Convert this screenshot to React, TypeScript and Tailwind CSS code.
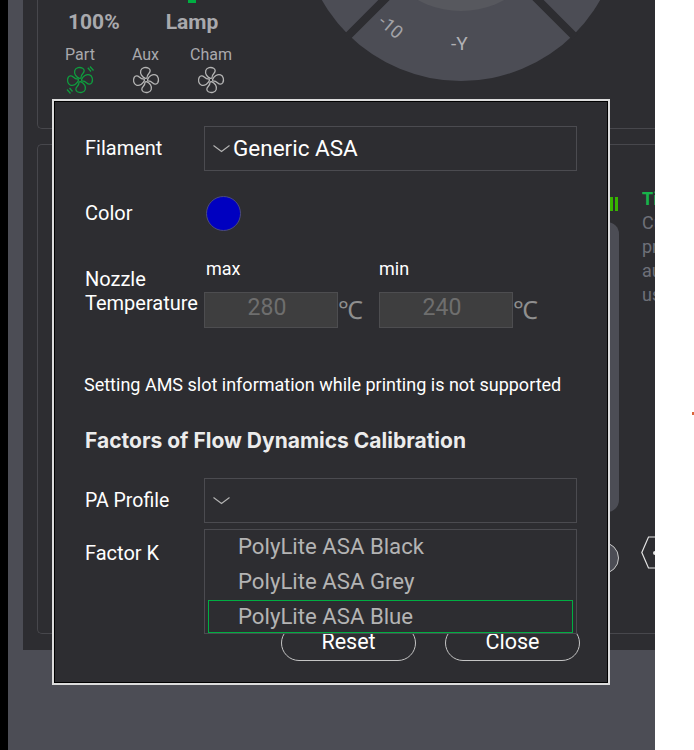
const FONT = "font-['Roboto','Noto_Sans',sans-serif]";

const PROFILES = ['PolyLite ASA Black', 'PolyLite ASA Grey', 'PolyLite ASA Blue'];

const BLADE = 'M15.4 14.4C12 13 9.8 9.6 10.8 6.4C11.8 3.6 16 2.8 18.6 4.2C20.6 5.4 20.6 7.6 19 9.2C17.6 10.6 16.9 12.2 16.9 14.2Z';

function Fan({ color, spinning = false }: { color: string; spinning?: boolean }) {
  return (
    <svg width="32" height="32" viewBox="0 0 32 32" fill="none" stroke={color} strokeWidth="1.3" strokeLinejoin="round" aria-hidden="true">
      {[0, 90, 180, 270].map((deg) => (
        <path key={deg} d={BLADE} transform={`rotate(${deg} 16 16)`} />
      ))}
      {spinning && (
        <>
          <path d="M26 2.5L29.5 6.5M23.8 3.8L27 7.5" />
          <path d="M3 25.5L6.5 29.5M5.5 24L8.5 27.5" />
        </>
      )}
    </svg>
  );
}

function Chevron() {
  return (
    <svg width="17" height="10" viewBox="0 0 17 10" fill="none" stroke="#b4b4b4" strokeWidth="1.1" aria-hidden="true">
      <path d="M0.5 1.5L8.5 7.5L16.5 1.5" />
    </svg>
  );
}

function FanLabel({ label, color, spinning }: { label: string; color: string; spinning?: boolean }) {
  return (
    <div className="flex w-[58px] flex-col items-center">
      <span className="text-[16px] leading-[18px] text-[#a9a9ad]">{label}</span>
      <Fan color={color} spinning={spinning} />
    </div>
  );
}

function TempInput({ label, value, inset = false }: { label: string; value: string; inset?: boolean }) {
  return (
    <div className="flex w-[175px] flex-col">
      <span className={`text-[18px] leading-[22px] text-white ${inset ? 'ml-[2px]' : ''}`}>{label}</span>
      <div className="mt-[12px] flex items-end">
        <div className="flex h-[36px] w-[134px] items-center justify-center border border-[#4d4d50] bg-[#3e3e3f] pb-[3px] pr-[8px] text-[23px] text-[#6e6e6e]">
          {value}
        </div>
        <span className="text-[25px] leading-[34px] text-[#8f8f8f]">℃</span>
      </div>
    </div>
  );
}

export default function App() {
  return (
    <div className={`relative flex h-[750px] w-[694px] overflow-hidden bg-white ${FONT}`}>
      <div className="h-full w-[8px] bg-black" />
      <div className="flex h-full w-[647px] flex-col bg-[#4c4d55] pl-[15px]">
        <div className="relative flex h-[650px] flex-col gap-[15px] overflow-hidden bg-[#2d2d31] pl-[14px]">
          <div className="relative h-[129px] shrink-0 rounded-bl-[5px] border-b border-l border-[#47474c]">
            <div className="absolute left-[30px] top-[10px] flex gap-[46px] text-[21px] font-bold leading-[24px] text-[#a9a9ad]">
              <span>100%</span>
              <span>Lamp</span>
            </div>
            <div className="absolute left-[150px] top-0 h-[3px] w-[8px] bg-[#00ae42]" />
            <div className="absolute left-[13px] top-[46px] flex gap-[7.5px]">
              <FanLabel label="Part" color="#0f9d3e" spinning />
              <FanLabel label="Aux" color="#b4b4b4" />
              <FanLabel label="Cham" color="#b4b4b4" />
            </div>
          </div>
          <div className="relative h-[490px] shrink-0 rounded-bl-[5px] rounded-tl-[5px] border-b border-l border-t border-[#47474c]" />

          {/* jog wheel behind the dialog */}
          <svg className="absolute left-[277px] top-0" width="320" height="84" viewBox="0 0 320 84" aria-hidden="true">
            <circle cx="161" cy="-79" r="160" fill="#4c4d55" />
            <circle cx="161" cy="-79" r="90" fill="#57585e" />
            <path d="M47 37L87 -3M275 37L235 -3" stroke="#2d2d31" strokeWidth="8" />
          </svg>
          <span className="absolute left-[355px] top-[17px] rotate-[40deg] text-[18px] leading-[20px] text-[#a3a3a8]">-10</span>
          <span className="absolute left-[428px] top-[34px] text-[19px] leading-[20px] text-[#b0b0b4]">-Y</span>

          <div className="absolute left-[587px] top-[197px] flex h-[14px] gap-[2px]">
            <div className="w-[3px] bg-[#37b400]" />
            <div className="w-[3px] bg-[#37b400]" />
          </div>
          <div className="absolute left-[570px] top-[222px] h-[290px] w-[26px] rounded-r-[12px] bg-[#4c4d55]" />
          <div className="absolute left-[619px] top-[187px] w-[20px] overflow-hidden text-[18px] leading-[24px] text-[#6e7078]">
            <div className="font-bold text-[#16b34a]">Ti</div>
            <div>Cu</div>
            <div>pr</div>
            <div>au</div>
            <div>us</div>
          </div>
          <div className="absolute left-[564px] top-[542px] h-[32px] w-[32px] rounded-full border border-[#c8c8c8] bg-[#4c4d55]" />
          <svg className="absolute left-[618px] top-[536px]" width="14" height="33" viewBox="0 0 14 33" fill="none" stroke="#e4e4e4" strokeWidth="1.2" aria-hidden="true">
            <path d="M14 1H7.5L0.8 16.5L7.5 32H14" />
            <circle cx="14" cy="17" r="2" fill="#e4e4e4" stroke="none" />
          </svg>
        </div>
      </div>

      <div className="absolute left-[692px] top-[412px] h-[3px] w-[2px] bg-[#d9653a]" />

      {/* Dialog */}
      <div className="absolute left-[52px] top-[99px] h-[586px] w-[558px] border-2 border-[#dcdcdc] bg-[#2d2d31] text-white shadow-[inset_0_0_0_1px_#000]">
        <div className="flex flex-col pl-[31px] pr-[31px] pt-[25px]">
          <div className="flex items-center">
            <span className="mb-[2px] w-[119px] text-[20px] leading-[24px]">Filament</span>
            <div className="flex h-[45px] w-[373px] items-center border border-[#4b4b50] pl-[8px]">
              <Chevron />
              <span className="mb-[2px] ml-[3px] text-[22.5px] leading-[28px]">Generic ASA</span>
            </div>
          </div>

          <div className="mt-[25px] flex items-center">
            <span className="mb-[2px] w-[119px] text-[20px] leading-[24px]">Color</span>
            <div className="ml-[2px] h-[35px] w-[35px] rounded-full border border-[#4b4b7a] bg-[#0000c0]" />
          </div>

          <div className="mt-[27px] flex">
            <span className="mt-[9px] w-[119px] text-[20px] leading-[24px]">
              Nozzle
              <br />
              Temperature
            </span>
            <div className="flex w-[373px]">
              <TempInput label="max" value="280" inset />
              <TempInput label="min" value="240" />
            </div>
          </div>

          <p className="-ml-px mt-[45px] text-[18px] leading-[24px]">Setting AMS slot information while printing is not supported</p>
          <h2 className="mt-[30px] font-['Inter',sans-serif] text-[21px] font-bold leading-[28px] text-[#ececec]">Factors of Flow Dynamics Calibration</h2>

          <div className="mt-[23px] flex items-center">
            <span className="w-[119px] text-[19.5px] leading-[24px]">PA Profile</span>
            <div className="flex h-[45px] w-[373px] items-center border border-[#4b4b50] pl-[8px]">
              <Chevron />
            </div>
          </div>

          <span className="mt-[18px] text-[20px] leading-[24px]">Factor K</span>
        </div>

        <div className="absolute bottom-[22px] left-[227px] flex gap-[29px]">
          <button type="button" className="h-[36px] w-[135px] rounded-[18px] border-[1.5px] border-[#c4c4c4] pb-[3px] text-[21.5px] leading-[30px] text-white">Reset</button>
          <button type="button" className="h-[36px] w-[135px] rounded-[18px] border-[1.5px] border-[#c4c4c4] pb-[3px] text-[21.5px] leading-[30px] text-white">Close</button>
        </div>

        {/* Open dropdown list */}
        <div className="absolute left-[150px] top-[428px] h-[105px] w-[373px] border border-[#4b4b50] bg-[#2d2d31] px-[3px]">
          {PROFILES.map((name, i) => (
            <div
              key={name}
              className={`flex items-center border pl-[29px] text-[22.2px] text-[#b4b4b4] ${i === 2 ? 'h-[33px] border-[#00ae42]' : 'h-[35px] border-transparent pb-[2px]'}`}
            >
              {name}
            </div>
          ))}
        </div>
      </div>
    </div>
  );
}
